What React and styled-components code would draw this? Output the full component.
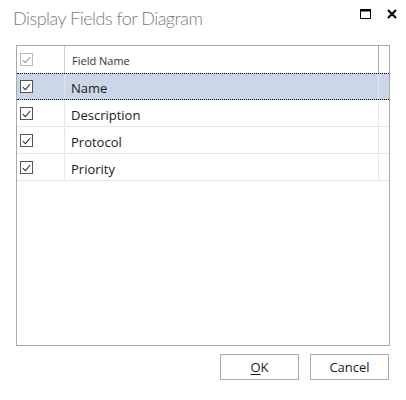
import React from 'react'
import styled, { createGlobalStyle } from 'styled-components'

const GlobalStyle = createGlobalStyle`
  html, body {
    margin: 0;
    padding: 0;
    background: #fff;
  }
  body {
    font-family: "Open Sans", "Noto Sans", "Liberation Sans", sans-serif;
  }
`

const fields = ['Name', 'Description', 'Protocol', 'Priority']

function Check({ muted }) {
  return (
    <Box muted={muted}>
      <svg width="9" height="8" viewBox="0 0 9 8">
        <path d="M0.8 4.2 L3.4 6.6 L8.2 1" fill="none" stroke={muted ? '#9a9a9a' : '#333'} strokeWidth="1.1" />
      </svg>
    </Box>
  )
}

export default function App() {
  return (
    <Window>
      <GlobalStyle />
      <TitleBar>
        <Title>Display Fields for Diagram</Title>
        <Controls>
          <svg width="11" height="10" viewBox="0 0 11 10">
            <rect x="0.5" y="0.5" width="10" height="9" fill="none" stroke="#000" />
            <rect x="0" y="0" width="11" height="2.5" fill="#000" />
          </svg>
          <svg width="10" height="10" viewBox="0 0 10 10">
            <path d="M1 1 L9 9 M9 1 L1 9" stroke="#000" strokeWidth="2.2" />
          </svg>
        </Controls>
      </TitleBar>

      <Grid>
        <HeaderRow>
          <CheckCell header>
            <Check muted />
          </CheckCell>
          <HeaderText>Field Name</HeaderText>
          <Spacer header />
        </HeaderRow>
        {fields.map((f, i) => (
          <Row key={f} selected={i === 0}>
            <CheckCell>
              <Check />
            </CheckCell>
            <CellText>{f}</CellText>
            <Spacer />
          </Row>
        ))}
      </Grid>

      <Footer>
        <Button><u>O</u>K</Button>
        <Button>Cancel</Button>
      </Footer>
    </Window>
  )
}

const Window = styled.div`
width: 406px;
height: 400px;
display: flex;
flex-direction: column;
background: #fff;
`
const TitleBar = styled.div`
height: 45px;
display: flex;
align-items: flex-start;
justify-content: space-between;
padding: 0 9px 0 13px;
box-sizing: border-box;
`
const Title = styled.div`
margin-top: 7px;
font-family: Lato, "Open Sans", sans-serif;
font-size: 18px;
font-weight: 300;
letter-spacing: -0.5px;
color: #7a7a7a;
`
const Controls = styled.div`
display: flex;
gap: 16px;
margin-top: 9px;
`
const Grid = styled.div`
margin: 0 16px 0 16px;
height: 301px;
border: 1px solid #a9a9a9;
box-sizing: border-box;
display: flex;
flex-direction: column;
`
const HeaderRow = styled.div`
height: 27px;
display: flex;
align-items: stretch;
flex-shrink: 0;
`
const Row = styled.div`
height: 27px;
display: flex;
align-items: stretch;
flex-shrink: 0;
box-sizing: border-box;
background: ${p => (p.selected ? '#cbd6e6' : '#fff')};
border-top: 1px dotted ${p => (p.selected ? '#000' : 'transparent')};
border-bottom: 1px ${p => (p.selected ? 'dotted #000' : 'solid #e6e6e6')};
`
const CheckCell = styled.div`
width: 48px;
display: flex;
align-items: center;
padding-left: 3px;
box-sizing: border-box;
border-right: 1px solid ${p => (p.header ? '#cfcfcf' : '#e6e6e6')};
`
const Box = styled.span`
width: 13px;
height: 13px;
box-sizing: border-box;
border: 1px solid ${p => (p.muted ? '#b9b9b9' : '#555')};
background: #fff;
display: flex;
align-items: center;
justify-content: center;
`
const HeaderText = styled.div`
flex: 1;
display: flex;
align-items: center;
padding-left: 7px;
padding-top: 2px;
font-size: 11px;
color: #333;
`
const CellText = styled.div`
flex: 1;
display: flex;
align-items: center;
padding-left: 6px;
padding-top: 3px;
font-size: 13px;
color: #1a1a1a;
`
const Spacer = styled.div`
width: 10px;
border-left: 1px solid ${p => (p.header ? '#a9a9a9' : '#e6e6e6')};
`
const Footer = styled.div`
display: flex;
justify-content: flex-end;
gap: 11px;
padding: 8px 17px 0 0;
`
const Button = styled.button`
width: 79px;
height: 26px;
border: 1px solid #adadad;
background: #fff;
font-family: inherit;
font-size: 13px;
color: #1a1a1a;
padding: 0;
u {
  text-decoration-thickness: 1px;
  text-underline-offset: 2px;
}
`
